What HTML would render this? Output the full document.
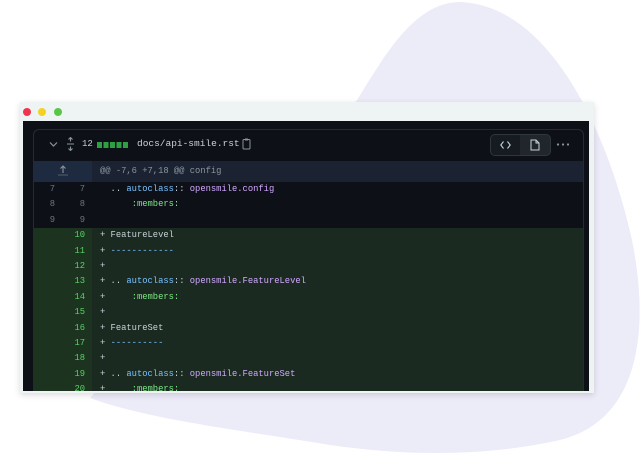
<!DOCTYPE html>
<html><head><style>
body{margin:0;width:643px;height:457px;background:#fff;position:relative;overflow:hidden;font-family:"Liberation Mono",monospace;}
.win{position:absolute;left:20px;top:102px;width:574px;height:291px;background:#eef3f3;box-shadow:0 2px 6px rgba(0,0,0,.15);}
.dot{position:absolute;top:6px;width:8px;height:8px;border-radius:50%;}
.dark{position:absolute;left:3px;top:19px;width:566px;height:270px;background:#0d1117;overflow:hidden;}
.box{position:absolute;left:10px;top:8px;width:549px;height:300px;border:1px solid #262b33;border-radius:6px;overflow:hidden;}
.hdr{height:31px;position:relative;color:#c9d1d9;font-size:9px;}
.hunk{position:absolute;top:31px;left:0;right:0;height:21px;background:#1b2333;}
.row{position:absolute;left:0;right:0;height:15.4px;font-size:8.8px;line-height:15.4px;color:#c9d1d9;white-space:pre;}
.g{position:absolute;left:0;width:58px;height:100%;}
.n1,.n2{position:absolute;text-align:right;width:12px;color:#6e7681;}
.n1{left:9px}.n2{left:39px}
.add .g{background:#1c3320}.add{background:#1a2a20}
.add .n2{color:#56d364;}
.c{position:absolute;left:66px;}
.k{color:#79c0ff}.p{color:#d2a8ff}.m{color:#7ee787}
</style></head><body>
<svg style="position:absolute;left:0;top:0" width="643" height="457"><path d="M357 100 C385 55 415 2 460 2 C545 5 605 120 632 240 C650 330 640 420 560 440 C480 458 400 455 330 445 C240 430 150 420 90 398 L357 100 Z" fill="#ecebf8"/></svg>
<div class="win">
<div class="dot" style="left:3px;background:#f0344e"></div>
<div class="dot" style="left:18px;background:#f4d224"></div>
<div class="dot" style="left:34px;background:#58c748"></div>
<div class="dark"><div class="box">
<div class="hdr">
<svg style="position:absolute;left:15px;top:11px" width="9" height="7"><path d="M1 1.5 L4.5 5 L8 1.5" stroke="#8b949e" stroke-width="1.2" fill="none"/></svg>
<svg style="position:absolute;left:32px;top:7px" width="9" height="14"><path d="M4.5 0.5 V4.5 M2.5 2.5 L4.5 0.5 L6.5 2.5 M1 7 H8 M4.5 9.5 V13.5 M2.5 11.5 L4.5 13.5 L6.5 11.5" stroke="#8b949e" stroke-width="1.1" fill="none"/></svg>
<span style="position:absolute;left:48px;top:9px">12</span>
<span style="position:absolute;left:63px;top:12px;width:32px;height:6px;background:repeating-linear-gradient(90deg,#2ea043 0 5px,transparent 5px 6.5px)"></span>
<span style="position:absolute;left:103px;top:8px;font-size:9.5px">docs/api-smile.rst</span>
<svg style="position:absolute;left:208px;top:8px" width="9" height="12"><rect x="1" y="1.5" width="7" height="9.5" rx="1" stroke="#8b949e" fill="none"/><rect x="3" y="0.5" width="3" height="2" fill="#8b949e"/></svg>
<span style="position:absolute;left:456px;top:4px;width:59px;height:20px;border:1px solid #30363d;border-radius:5px;background:#21262d;overflow:hidden"><span style="position:absolute;left:0;top:0;width:29px;height:20px;background:#161b22"><svg style="position:absolute;left:9px;top:6px" width="11" height="8"><path d="M3.5 0.5 L0.8 4 L3.5 7.5 M7.5 0.5 L10.2 4 L7.5 7.5" stroke="#c9d1d9" stroke-width="1.1" fill="none"/></svg></span><svg style="position:absolute;left:39px;top:4px" width="10" height="12"><path d="M1 1 H6 L9 4 V11 H1 Z M6 1 V4 H9" stroke="#c9d1d9" stroke-width="1" fill="none"/></svg></span>
<svg style="position:absolute;left:522px;top:13px" width="14" height="3"><circle cx="2" cy="1.5" r="1.1" fill="#8b949e"/><circle cx="7" cy="1.5" r="1.1" fill="#8b949e"/><circle cx="12" cy="1.5" r="1.1" fill="#8b949e"/></svg>
</div>
<div class="hunk"><div class="g" style="background:#1e2a3f"><svg style="position:absolute;left:24px;top:4px" width="10" height="12"><path d="M5 1 V8 M2.5 3.5 L5 1 L7.5 3.5" stroke="#8b949e" stroke-width="1.1" fill="none"/><path d="M0.5 10 H9.5" stroke="#8b949e" stroke-dasharray="1 1"/></svg></div><span style="position:absolute;left:66px;top:5px;font-size:8.8px;color:#8b949e">@@ -7,6 +7,18 @@ config</span></div>
<div class="row" style="top:52px"><div class="g"><span class="n1">7</span><span class="n2">7</span></div><span class="c">  .. <span class="k">autoclass</span>:: <span class="p">opensmile.config</span></span></div>
<div class="row" style="top:67.4px"><div class="g"><span class="n1">8</span><span class="n2">8</span></div><span class="c">      <span class="m">:members:</span></span></div>
<div class="row" style="top:82.8px"><div class="g"><span class="n1">9</span><span class="n2">9</span></div></div>
<div class="row add" style="top:98.2px;height:200px"></div>
<div class="row add" style="top:98.2px"><div class="g"><span class="n2">10</span></div><span class="c">+ FeatureLevel</span></div>
<div class="row add" style="top:113.6px"><div class="g"><span class="n2">11</span></div><span class="c">+ <span class="k">------------</span></span></div>
<div class="row add" style="top:129px"><div class="g"><span class="n2">12</span></div><span class="c">+</span></div>
<div class="row add" style="top:144.4px"><div class="g"><span class="n2">13</span></div><span class="c">+ .. <span class="k">autoclass</span>:: <span class="p">opensmile.FeatureLevel</span></span></div>
<div class="row add" style="top:159.8px"><div class="g"><span class="n2">14</span></div><span class="c">+     <span class="m">:members:</span></span></div>
<div class="row add" style="top:175.2px"><div class="g"><span class="n2">15</span></div><span class="c">+</span></div>
<div class="row add" style="top:190.6px"><div class="g"><span class="n2">16</span></div><span class="c">+ FeatureSet</span></div>
<div class="row add" style="top:206px"><div class="g"><span class="n2">17</span></div><span class="c">+ <span class="k">----------</span></span></div>
<div class="row add" style="top:221.4px"><div class="g"><span class="n2">18</span></div><span class="c">+</span></div>
<div class="row add" style="top:236.8px"><div class="g"><span class="n2">19</span></div><span class="c">+ .. <span class="k">autoclass</span>:: <span class="p">opensmile.FeatureSet</span></span></div>
<div class="row add" style="top:252.2px"><div class="g"><span class="n2">20</span></div><span class="c">+     <span class="m">:members:</span></span></div>
</div></div></div>
</body></html>
